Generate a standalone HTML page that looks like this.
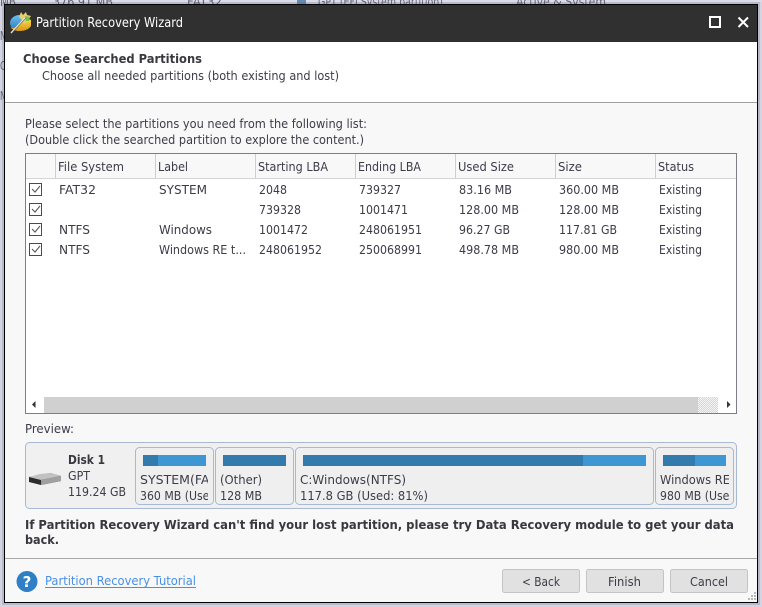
<!DOCTYPE html>
<html>
<head>
<meta charset="utf-8">
<style>
html,body{margin:0;padding:0;width:762px;height:607px;overflow:hidden;background:#d4d4e2}
svg{display:block;position:absolute;left:0;top:0}
text{font-family:"DejaVu Sans",sans-serif;font-size:12px;fill:#3c3c48;white-space:pre}
.b{font-weight:bold;fill:#38383f}
</style>
</head>
<body>
<svg width="762" height="607" viewBox="0 0 762 607" xmlns="http://www.w3.org/2000/svg">
<defs>
<clipPath id="c1"><rect x="138" y="470" width="70" height="34"/></clipPath>
<clipPath id="c2"><rect x="658" y="470" width="71" height="34"/></clipPath>
<clipPath id="top"><rect x="0" y="0" width="762" height="4"/></clipPath>
<pattern id="dither" width="2" height="2" patternUnits="userSpaceOnUse"><rect width="2" height="2" fill="#d6d6d6"/><rect width="1" height="1" fill="#f4f4f4"/><rect x="1" y="1" width="1" height="1" fill="#f4f4f4"/></pattern>
<linearGradient id="ic1" x1="0" y1="0" x2="0" y2="1"><stop offset="0" stop-color="#6cc0ee"/><stop offset="1" stop-color="#2a76bd"/></linearGradient>
<linearGradient id="ic2" x1="0" y1="0" x2="0" y2="1"><stop offset="0" stop-color="#fbdc55"/><stop offset="1" stop-color="#d9980f"/></linearGradient>
</defs>

<!-- background window peek -->
<rect width="762" height="607" fill="#d4d4e2"/>
<rect x="0" y="0" width="762" height="2" fill="#dcdce8"/>
<rect x="2" y="2" width="758" height="603" fill="#b9b9cc"/>
<g opacity=".75">
<text x="0" y="6" textLength="16" lengthAdjust="spacingAndGlyphs">MB</text>
<text x="53" y="6" textLength="60" lengthAdjust="spacingAndGlyphs">376.91 MB</text>
<text x="187" y="6" textLength="35" lengthAdjust="spacingAndGlyphs">FAT32</text>
<rect x="297" y="0" width="9" height="4" fill="#41719c"/>
<text x="318" y="6" textLength="125" lengthAdjust="spacingAndGlyphs">GPT (EFI System partition)</text>
<text x="516" y="6" textLength="90" lengthAdjust="spacingAndGlyphs">Active &amp; System</text>
<text x="0" y="40" textLength="6" lengthAdjust="spacingAndGlyphs">N</text>
<text x="0" y="70" textLength="6" lengthAdjust="spacingAndGlyphs">C</text>
<text x="0" y="100" textLength="6" lengthAdjust="spacingAndGlyphs">N</text>
</g>

<!-- window -->
<rect x="4" y="4" width="754" height="599" fill="#000"/>
<rect x="5" y="5" width="752" height="37" fill="#303030"/>
<rect x="5" y="42" width="752" height="60" fill="#fff"/>
<rect x="5" y="102" width="752" height="1" fill="#a0a0a0"/>
<rect x="5" y="103" width="752" height="499" fill="#f8f8f8"/>

<!-- app icon -->
<ellipse cx="19.5" cy="23" rx="9.5" ry="8" fill="url(#ic1)"/>
<path d="M10.5 27 C13 32.500 27 32.500 31 26 L31 20 L26 18 L17 27 C14 28.500 12 28 10.500 27Z" fill="url(#ic2)"/>
<path d="M19 17 L21 12 L23 15 L26 12 L27 15 L31 16 L29 19 L31 22 L27 22 L24 24 L22 20Z" fill="#e6cf72"/>
<path d="M25 16 L30 17 L29 21 L26 21Z" fill="#74c048"/>
<path d="M11 33 L25 18" stroke="#e4e4dc" stroke-width="1.5"/>
<path d="M12 33 L26 18" stroke="#6b6b5c" stroke-width=".6"/>

<text x="36" y="27" style="fill:#fff;font-size:13px" textLength="147" lengthAdjust="spacingAndGlyphs">Partition Recovery Wizard</text>

<!-- window controls -->
<rect x="710" y="17" width="10" height="10" fill="none" stroke="#fff" stroke-width="2"/>
<path d="M738.500 17.500 L748 27 M748 17.500 L738.500 27" stroke="#fff" stroke-width="2"/>

<!-- header text -->
<text class="b" x="23" y="63" textLength="179" lengthAdjust="spacingAndGlyphs">Choose Searched Partitions</text>
<text x="42" y="80" textLength="297" lengthAdjust="spacingAndGlyphs">Choose all needed partitions (both existing and lost)</text>

<text x="25" y="128" textLength="342" lengthAdjust="spacingAndGlyphs">Please select the partitions you need from the following list:</text>
<text x="25" y="144" textLength="339" lengthAdjust="spacingAndGlyphs">(Double click the searched partition to explore the content.)</text>

<!-- list -->
<rect x="25.500" y="153.500" width="711" height="260" fill="#fff" stroke="#7d7d85"/>
<rect x="26" y="154" width="710" height="24" fill="#f8f8f8"/>
<rect x="26" y="178" width="710" height="1" fill="#d5d5d5"/>
<g fill="#c9cfd6">
<rect x="55" y="154" width="1" height="24"/><rect x="155" y="154" width="1" height="24"/>
<rect x="255" y="154" width="1" height="24"/><rect x="355" y="154" width="1" height="24"/>
<rect x="455" y="154" width="1" height="24"/><rect x="555" y="154" width="1" height="24"/>
<rect x="655" y="154" width="1" height="24"/>
</g>
<text x="58" y="171" textLength="66" lengthAdjust="spacingAndGlyphs">File System</text>
<text x="158" y="171" textLength="30" lengthAdjust="spacingAndGlyphs">Label</text>
<text x="258" y="171" textLength="70" lengthAdjust="spacingAndGlyphs">Starting LBA</text>
<text x="358" y="171" textLength="63" lengthAdjust="spacingAndGlyphs">Ending LBA</text>
<text x="458" y="171" textLength="56" lengthAdjust="spacingAndGlyphs">Used Size</text>
<text x="558" y="171" textLength="24" lengthAdjust="spacingAndGlyphs">Size</text>
<text x="658" y="171" textLength="36" lengthAdjust="spacingAndGlyphs">Status</text>

<!-- checkboxes -->
<g fill="#fff" stroke="#4a4a4a">
<rect x="29.500" y="183.500" width="12" height="12"/>
<rect x="29.500" y="203.500" width="12" height="12"/>
<rect x="29.500" y="223.500" width="12" height="12"/>
<rect x="29.500" y="243.500" width="12" height="12"/>
</g>
<g fill="none" stroke="#5a5a5a" stroke-width="1.1">
<path d="M32 189 L35 192 L40 186"/>
<path d="M32 209 L35 212 L40 206"/>
<path d="M32 229 L35 232 L40 226"/>
<path d="M32 249 L35 252 L40 246"/>
</g>

<!-- rows -->
<text x="59" y="194" textLength="37" lengthAdjust="spacingAndGlyphs">FAT32</text>
<text x="159" y="194" textLength="48" lengthAdjust="spacingAndGlyphs">SYSTEM</text>
<text x="259" y="194" textLength="28" lengthAdjust="spacingAndGlyphs">2048</text>
<text x="359" y="194" textLength="42" lengthAdjust="spacingAndGlyphs">739327</text>
<text x="459" y="194" textLength="53" lengthAdjust="spacingAndGlyphs">83.16 MB</text>
<text x="559" y="194" textLength="60" lengthAdjust="spacingAndGlyphs">360.00 MB</text>
<text x="659" y="194" textLength="43" lengthAdjust="spacingAndGlyphs">Existing</text>

<text x="259" y="214" textLength="42" lengthAdjust="spacingAndGlyphs">739328</text>
<text x="359" y="214" textLength="49" lengthAdjust="spacingAndGlyphs">1001471</text>
<text x="459" y="214" textLength="60" lengthAdjust="spacingAndGlyphs">128.00 MB</text>
<text x="559" y="214" textLength="60" lengthAdjust="spacingAndGlyphs">128.00 MB</text>
<text x="659" y="214" textLength="43" lengthAdjust="spacingAndGlyphs">Existing</text>

<text x="59" y="234" textLength="31" lengthAdjust="spacingAndGlyphs">NTFS</text>
<text x="159" y="234" textLength="53" lengthAdjust="spacingAndGlyphs">Windows</text>
<text x="259" y="234" textLength="49" lengthAdjust="spacingAndGlyphs">1001472</text>
<text x="359" y="234" textLength="63" lengthAdjust="spacingAndGlyphs">248061951</text>
<text x="459" y="234" textLength="51" lengthAdjust="spacingAndGlyphs">96.27 GB</text>
<text x="559" y="234" textLength="58" lengthAdjust="spacingAndGlyphs">117.81 GB</text>
<text x="659" y="234" textLength="43" lengthAdjust="spacingAndGlyphs">Existing</text>

<text x="59" y="254" textLength="31" lengthAdjust="spacingAndGlyphs">NTFS</text>
<text x="159" y="254" textLength="87" lengthAdjust="spacingAndGlyphs">Windows RE t...</text>
<text x="259" y="254" textLength="63" lengthAdjust="spacingAndGlyphs">248061952</text>
<text x="359" y="254" textLength="63" lengthAdjust="spacingAndGlyphs">250068991</text>
<text x="459" y="254" textLength="60" lengthAdjust="spacingAndGlyphs">498.78 MB</text>
<text x="559" y="254" textLength="60" lengthAdjust="spacingAndGlyphs">980.00 MB</text>
<text x="659" y="254" textLength="43" lengthAdjust="spacingAndGlyphs">Existing</text>

<!-- scrollbar -->
<rect x="44" y="397" width="654" height="16" fill="#d0d0d0"/>
<rect x="698" y="397" width="20" height="16" fill="url(#dither)"/>
<path d="M32 404.500 L35.500 401 L35.500 408Z" fill="#333"/>
<path d="M727 401 L730.500 404.500 L727 408Z" fill="#333"/>
<rect x="25" y="413" width="712" height="1" fill="#7d7d85"/>

<!-- preview -->
<text x="25" y="433" textLength="49" lengthAdjust="spacingAndGlyphs">Preview:</text>
<rect x="25.500" y="442.500" width="711" height="66" rx="4" fill="#f0f0f0" stroke="#a9b8d3"/>

<!-- disk icon -->
<path d="M29 477 L50 473 L61 476 L61 481 L41 485 L29 482Z" fill="#2c2c2c"/>
<path d="M29 477 L40 474 L50 473 L61 476 L41 480Z" fill="#c2c2c2"/>
<path d="M41 480 L61 476 L61 481 L41 485Z" fill="#a0a0a0"/>
<rect x="41" y="481" width="1.500" height="1.500" fill="#3ecb4c"/>

<text class="b" x="68" y="464" textLength="37" lengthAdjust="spacingAndGlyphs">Disk 1</text>
<text x="68" y="480" textLength="22" lengthAdjust="spacingAndGlyphs">GPT</text>
<text x="68" y="496" textLength="58" lengthAdjust="spacingAndGlyphs">119.24 GB</text>

<!-- partitions -->
<g fill="#efefef" stroke="#a9b8d3">
<rect x="135.500" y="447.500" width="78" height="57" rx="4"/>
<rect x="215.500" y="447.500" width="78" height="57" rx="4"/>
<rect x="295.500" y="447.500" width="358" height="57" rx="4"/>
<rect x="655.500" y="447.500" width="78" height="57" rx="4"/>
</g>
<rect x="143" y="455" width="63" height="11" fill="#3d97d3"/><rect x="143" y="455" width="15" height="11" fill="#337aad"/>
<rect x="223" y="455" width="63" height="11" fill="#337aad"/>
<rect x="303" y="455" width="343" height="11" fill="#3d97d3"/><rect x="303" y="455" width="280" height="11" fill="#337aad"/>
<rect x="663" y="455" width="63" height="11" fill="#3d97d3"/><rect x="663" y="455" width="32" height="11" fill="#337aad"/>

<g clip-path="url(#c1)">
<text x="140" y="484" textLength="97" lengthAdjust="spacingAndGlyphs">SYSTEM(FAT32)</text>
<text x="140" y="500" textLength="112" lengthAdjust="spacingAndGlyphs">360 MB (Used: 23%)</text>
</g>
<text x="220" y="484" textLength="42" lengthAdjust="spacingAndGlyphs">(Other)</text>
<text x="220" y="500" textLength="42" lengthAdjust="spacingAndGlyphs">128 MB</text>
<text x="300" y="484" textLength="106" lengthAdjust="spacingAndGlyphs">C:Windows(NTFS)</text>
<text x="300" y="500" textLength="128" lengthAdjust="spacingAndGlyphs">117.8 GB (Used: 81%)</text>
<g clip-path="url(#c2)">
<text x="660" y="484" textLength="70" lengthAdjust="spacingAndGlyphs">Windows RE</text>
<text x="660" y="500" textLength="112" lengthAdjust="spacingAndGlyphs">980 MB (Used: 50%)</text>
</g>

<!-- notice -->
<text class="b" x="25" y="529" textLength="709" lengthAdjust="spacingAndGlyphs">If Partition Recovery Wizard can't find your lost partition, please try Data Recovery module to get your data</text>
<text class="b" x="25" y="544" textLength="34" lengthAdjust="spacingAndGlyphs">back.</text>

<rect x="5" y="558" width="752" height="1" fill="#a8a8a8"/>

<!-- help -->
<circle cx="27" cy="581.500" r="10.500" fill="#2e7fc4"/>
<text x="27" y="587" text-anchor="middle" style="fill:#fff;font-size:15px;font-weight:bold">?</text>

<text x="45" y="585" style="fill:#4a90e2" textLength="151" lengthAdjust="spacingAndGlyphs">Partition Recovery Tutorial</text>
<rect x="45" y="587" width="151" height="1" fill="#4a90e2"/>

<!-- buttons -->
<g fill="#e1e1e1" stroke="#c4c4c4">
<rect x="502.500" y="569.500" width="77" height="23" rx="2"/>
<rect x="586.500" y="569.500" width="77" height="23" rx="2"/>
<rect x="670.500" y="569.500" width="77" height="23" rx="2"/>
</g>
<text x="522" y="586" textLength="38" lengthAdjust="spacingAndGlyphs">&lt; Back</text>
<text x="608" y="586" textLength="33" lengthAdjust="spacingAndGlyphs">Finish</text>
<text x="690" y="586" textLength="38" lengthAdjust="spacingAndGlyphs">Cancel</text>

<!-- grip -->
<g fill="#b8b8b8">
<rect x="754" y="592" width="2" height="2"/>
<rect x="751" y="595" width="2" height="2"/><rect x="754" y="595" width="2" height="2"/>
<rect x="748" y="598" width="2" height="2"/><rect x="751" y="598" width="2" height="2"/><rect x="754" y="598" width="2" height="2"/>
</g>
</svg>
</body>
</html>
